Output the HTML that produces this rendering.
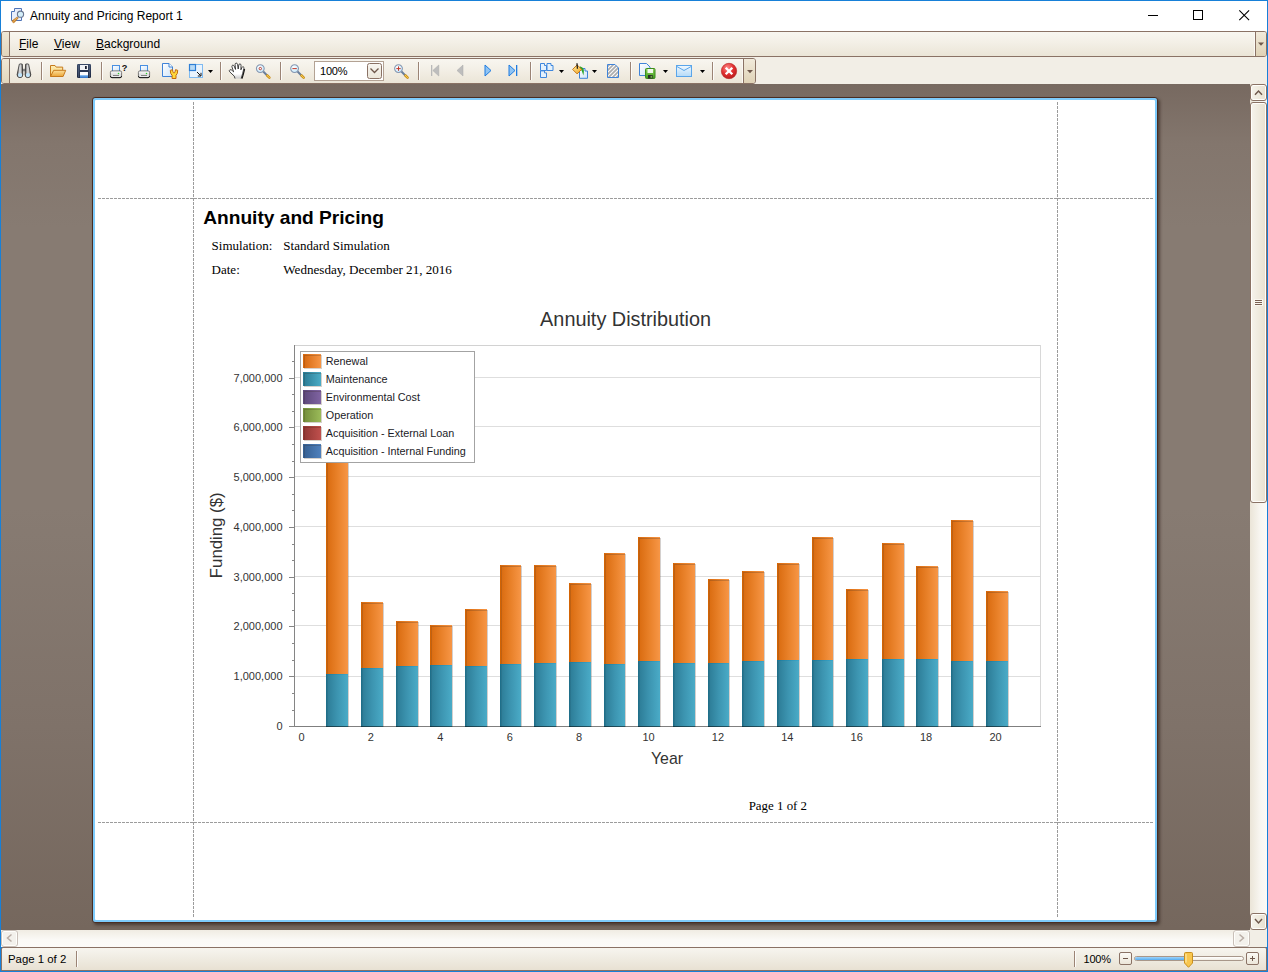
<!DOCTYPE html>
<html><head><meta charset="utf-8"><title>Annuity and Pricing Report 1</title>
<style>
html,body{margin:0;padding:0;}
body{width:1268px;height:972px;overflow:hidden;position:relative;background:#1780d8;font-family:"Liberation Sans",sans-serif;font-size:12px;color:#000;}
.abs{position:absolute;}
#title{left:1px;top:1px;width:1266px;height:30px;background:#fff;}
#title .cap{position:absolute;left:29px;top:7px;font-size:12px;line-height:16px;white-space:nowrap;}
#chrome{left:1px;top:31px;width:1266px;height:53px;background:#f2eee6;}
.bar{position:absolute;box-sizing:border-box;border:1px solid #8a7265;border-radius:3px;background:linear-gradient(#f8f6f0 0%,#f3efe6 45%,#ebe5d7 100%);}
#menubar{left:1px;top:31px;width:1266px;height:26px;}
#toolbar{left:1px;top:58px;width:755px;height:26px;}
.grip{position:absolute;left:0;top:0;width:7px;height:24px;background:linear-gradient(#efe7d6,#e2d6bd);border-right:1px solid #8a7265;border-radius:2px 0 0 2px;}
.endstrip{position:absolute;right:0;top:0;width:10px;height:24px;background:linear-gradient(#f1eadb,#dfd2b6);border-left:1px solid #8a7265;box-shadow:-1px 0 0 #fbf9f4;border-radius:0 2px 2px 0;}
.menu{position:absolute;top:4px;font-size:12px;line-height:16px;white-space:nowrap;}
.menu u{text-decoration:underline;}
.sep{position:absolute;top:3px;width:1px;height:18px;background:#9b8475;box-shadow:1px 0 0 #fdfcfa;}
#preview{left:1px;top:84px;width:1249px;height:846px;background:linear-gradient(#776960 0%,#83766d 7%,#877b72 17%,#877b72 50%,#7f7269 76%,#75675d 100%);}
#page{left:92px;top:97px;width:1066px;height:826px;box-sizing:border-box;border:1px solid #4a2d22;border-radius:3px;background:#7ecbfb;box-shadow:2px 2px 3px rgba(40,25,20,.55);}
#pagein{left:95px;top:100px;width:1060px;height:820px;background:#fff;border-radius:1px;}
.dashv{position:absolute;width:1px;background:repeating-linear-gradient(to bottom,#9c9c9c 0,#9c9c9c 3px,transparent 3px,transparent 4px);}
.dashh{position:absolute;height:1px;background:repeating-linear-gradient(to right,#9c9c9c 0,#9c9c9c 3px,transparent 3px,transparent 4px);}
#vscroll{left:1250px;top:84px;width:17px;height:846px;background:linear-gradient(to right,#ebe5d8,#f8f6f1 60%,#fbfaf7);}
#hscroll{left:1px;top:930px;width:1249px;height:17px;background:linear-gradient(#f0ece3,#fbfaf7 60%,#fcfbf9);}
#corner{left:1250px;top:930px;width:17px;height:17px;background:#f2eee6;}
.sb{position:absolute;box-sizing:border-box;border:1px solid #8a7265;border-radius:3px;background:linear-gradient(to right,#f6f3ec,#e8e1d0);box-shadow:inset 0 0 0 1px #fffefb;}
.sb.dis{border-color:#c9c0b9;background:#f3f1ec;}
.zb{position:absolute;width:13px;height:13px;box-sizing:border-box;border:1px solid #8a7265;border-radius:2px;background:linear-gradient(#fbfaf6,#ece6d9);}
.sbtn{position:absolute;box-sizing:border-box;border:1px solid #c9bdb0;border-radius:3px;background:linear-gradient(#fbfaf7,#ece6da);}
#status{left:1px;top:947px;width:1266px;height:24px;box-sizing:border-box;border:1px solid #8a7265;border-radius:2px 2px 0 0;background:linear-gradient(#f7f5ef,#efebe1 50%,#e8e1d3);}
</style></head>
<body>
<div id="title" class="abs"><span class="cap">Annuity and Pricing Report 1</span></div>
<div id="chrome" class="abs"></div>
<div id="menubar" class="bar"><div class="grip"></div><div class="endstrip"></div>
<span class="menu" style="left:17px"><u>F</u>ile</span>
<span class="menu" style="left:52px"><u>V</u>iew</span>
<span class="menu" style="left:94px"><u>B</u>ackground</span>
</div>
<div id="toolbar" class="bar"><div class="grip"></div><div class="endstrip" style="width:11px"></div>
<div style="position:absolute;left:312px;top:2px;width:70px;height:20px;box-sizing:border-box;border:1px solid #b3a294;background:#fff">
 <span style="position:absolute;left:5px;top:1px;font-size:11px;line-height:16px;white-space:nowrap;letter-spacing:-.200px">100%</span>
 <div style="position:absolute;left:52px;top:1px;width:15px;height:16px;box-sizing:border-box;border:1px solid #8a7265;border-radius:2.500px;background:linear-gradient(#f8f6f1,#ebe6da)"></div>
</div>
<div class="sep" style="left:39px"></div><div class="sep" style="left:99px"></div><div class="sep" style="left:218px"></div><div class="sep" style="left:278px"></div>
<div class="sep" style="left:416px"></div><div class="sep" style="left:528px"></div><div class="sep" style="left:628px"></div><div class="sep" style="left:710px"></div>
</div>
<div id="preview" class="abs"></div>
<div id="page" class="abs"></div><div id="pagein" class="abs"></div>
<div class="dashv" style="left:193px;top:102px;height:815px"></div>
<div class="dashv" style="left:1057px;top:102px;height:815px"></div>
<div class="dashh" style="left:98px;top:198px;width:1055px"></div>
<div class="dashh" style="left:98px;top:822px;width:1055px"></div>
<svg id="chart" width="1268" height="972" viewBox="0 0 1268 972" shape-rendering="crispEdges" style="position:absolute;left:0;top:0">
<defs>
<linearGradient id="gO" x1="0" x2="1" y1="0" y2="0"><stop offset="0" stop-color="#d8690d"/><stop offset="0.5" stop-color="#e88028"/><stop offset="1" stop-color="#f79646"/></linearGradient>
<linearGradient id="gT" x1="0" x2="1" y1="0" y2="0"><stop offset="0" stop-color="#2b7a94"/><stop offset="0.5" stop-color="#3c94b0"/><stop offset="1" stop-color="#4aabc7"/></linearGradient>
<linearGradient id="L0" x1="0" x2="1" y1="0" y2="0"><stop offset="0" stop-color="#d5670f"/><stop offset="1" stop-color="#f79646"/></linearGradient>
<linearGradient id="L1" x1="0" x2="1" y1="0" y2="0"><stop offset="0" stop-color="#2a7a93"/><stop offset="1" stop-color="#4bacc6"/></linearGradient>
<linearGradient id="L2" x1="0" x2="1" y1="0" y2="0"><stop offset="0" stop-color="#5c477a"/><stop offset="1" stop-color="#8064a2"/></linearGradient>
<linearGradient id="L3" x1="0" x2="1" y1="0" y2="0"><stop offset="0" stop-color="#728c3a"/><stop offset="1" stop-color="#9bbb59"/></linearGradient>
<linearGradient id="L4" x1="0" x2="1" y1="0" y2="0"><stop offset="0" stop-color="#8f3633"/><stop offset="1" stop-color="#c0504d"/></linearGradient>
<linearGradient id="L5" x1="0" x2="1" y1="0" y2="0"><stop offset="0" stop-color="#365f91"/><stop offset="1" stop-color="#4f81bd"/></linearGradient>
<linearGradient id="gT2" x1="0" x2="1" y1="0" y2="0"><stop offset="0" stop-color="#1d7797"/><stop offset="1" stop-color="#3ba7cb"/></linearGradient>
</defs>
<rect x="295" y="676" width="745" height="1" fill="#dedede"/>
<rect x="295" y="625" width="745" height="1" fill="#dedede"/>
<rect x="295" y="576" width="745" height="1" fill="#dedede"/>
<rect x="295" y="526" width="745" height="1" fill="#dedede"/>
<rect x="295" y="476" width="745" height="1" fill="#dedede"/>
<rect x="295" y="426" width="745" height="1" fill="#dedede"/>
<rect x="295" y="377" width="745" height="1" fill="#dedede"/>
<rect x="294" y="345" width="747" height="1" fill="#d2d2d2"/>
<rect x="1040" y="345" width="1" height="381" fill="#d8d8d8"/>
<rect x="348" y="401" width="1" height="326" fill="#5a4a40" opacity="0.26"/>
<rect x="326" y="400" width="22" height="274" fill="url(#gO)"/>
<rect x="326" y="400" width="1" height="274" fill="#d36404"/>
<rect x="327" y="401" width="21" height="1" fill="#5a3a20" opacity="0.28"/>
<rect x="327" y="402" width="1" height="272" fill="#5a3a20" opacity="0.22"/>
<rect x="326" y="674" width="22" height="53" fill="url(#gT)"/>
<rect x="326" y="674" width="22" height="1" fill="url(#gT2)"/>
<rect x="326" y="674" width="1" height="53" fill="#1f6f8a"/>
<rect x="327" y="675" width="1" height="52" fill="#103848" opacity="0.12"/>
<rect x="383" y="603" width="1" height="124" fill="#5a4a40" opacity="0.26"/>
<rect x="361" y="602" width="22" height="66" fill="url(#gO)"/>
<rect x="361" y="602" width="1" height="66" fill="#d36404"/>
<rect x="362" y="603" width="21" height="1" fill="#5a3a20" opacity="0.28"/>
<rect x="362" y="604" width="1" height="64" fill="#5a3a20" opacity="0.22"/>
<rect x="361" y="668" width="22" height="59" fill="url(#gT)"/>
<rect x="361" y="668" width="22" height="1" fill="url(#gT2)"/>
<rect x="361" y="668" width="1" height="59" fill="#1f6f8a"/>
<rect x="362" y="669" width="1" height="58" fill="#103848" opacity="0.12"/>
<rect x="418" y="622" width="1" height="105" fill="#5a4a40" opacity="0.26"/>
<rect x="396" y="621" width="22" height="45" fill="url(#gO)"/>
<rect x="396" y="621" width="1" height="45" fill="#d36404"/>
<rect x="397" y="622" width="21" height="1" fill="#5a3a20" opacity="0.28"/>
<rect x="397" y="623" width="1" height="43" fill="#5a3a20" opacity="0.22"/>
<rect x="396" y="666" width="22" height="61" fill="url(#gT)"/>
<rect x="396" y="666" width="22" height="1" fill="url(#gT2)"/>
<rect x="396" y="666" width="1" height="61" fill="#1f6f8a"/>
<rect x="397" y="667" width="1" height="60" fill="#103848" opacity="0.12"/>
<rect x="452" y="626" width="1" height="101" fill="#5a4a40" opacity="0.26"/>
<rect x="430" y="625" width="22" height="40" fill="url(#gO)"/>
<rect x="430" y="625" width="1" height="40" fill="#d36404"/>
<rect x="431" y="626" width="21" height="1" fill="#5a3a20" opacity="0.28"/>
<rect x="431" y="627" width="1" height="38" fill="#5a3a20" opacity="0.22"/>
<rect x="430" y="665" width="22" height="62" fill="url(#gT)"/>
<rect x="430" y="665" width="22" height="1" fill="url(#gT2)"/>
<rect x="430" y="665" width="1" height="62" fill="#1f6f8a"/>
<rect x="431" y="666" width="1" height="61" fill="#103848" opacity="0.12"/>
<rect x="487" y="610" width="1" height="117" fill="#5a4a40" opacity="0.26"/>
<rect x="465" y="609" width="22" height="57" fill="url(#gO)"/>
<rect x="465" y="609" width="1" height="57" fill="#d36404"/>
<rect x="466" y="610" width="21" height="1" fill="#5a3a20" opacity="0.28"/>
<rect x="466" y="611" width="1" height="55" fill="#5a3a20" opacity="0.22"/>
<rect x="465" y="666" width="22" height="61" fill="url(#gT)"/>
<rect x="465" y="666" width="22" height="1" fill="url(#gT2)"/>
<rect x="465" y="666" width="1" height="61" fill="#1f6f8a"/>
<rect x="466" y="667" width="1" height="60" fill="#103848" opacity="0.12"/>
<rect x="521" y="566" width="1" height="161" fill="#5a4a40" opacity="0.26"/>
<rect x="500" y="565" width="21" height="99" fill="url(#gO)"/>
<rect x="500" y="565" width="1" height="99" fill="#d36404"/>
<rect x="501" y="566" width="20" height="1" fill="#5a3a20" opacity="0.28"/>
<rect x="501" y="567" width="1" height="97" fill="#5a3a20" opacity="0.22"/>
<rect x="500" y="664" width="21" height="63" fill="url(#gT)"/>
<rect x="500" y="664" width="21" height="1" fill="url(#gT2)"/>
<rect x="500" y="664" width="1" height="63" fill="#1f6f8a"/>
<rect x="501" y="665" width="1" height="62" fill="#103848" opacity="0.12"/>
<rect x="556" y="566" width="1" height="161" fill="#5a4a40" opacity="0.26"/>
<rect x="534" y="565" width="22" height="98" fill="url(#gO)"/>
<rect x="534" y="565" width="1" height="98" fill="#d36404"/>
<rect x="535" y="566" width="21" height="1" fill="#5a3a20" opacity="0.28"/>
<rect x="535" y="567" width="1" height="96" fill="#5a3a20" opacity="0.22"/>
<rect x="534" y="663" width="22" height="64" fill="url(#gT)"/>
<rect x="534" y="663" width="22" height="1" fill="url(#gT2)"/>
<rect x="534" y="663" width="1" height="64" fill="#1f6f8a"/>
<rect x="535" y="664" width="1" height="63" fill="#103848" opacity="0.12"/>
<rect x="591" y="584" width="1" height="143" fill="#5a4a40" opacity="0.26"/>
<rect x="569" y="583" width="22" height="79" fill="url(#gO)"/>
<rect x="569" y="583" width="1" height="79" fill="#d36404"/>
<rect x="570" y="584" width="21" height="1" fill="#5a3a20" opacity="0.28"/>
<rect x="570" y="585" width="1" height="77" fill="#5a3a20" opacity="0.22"/>
<rect x="569" y="662" width="22" height="65" fill="url(#gT)"/>
<rect x="569" y="662" width="22" height="1" fill="url(#gT2)"/>
<rect x="569" y="662" width="1" height="65" fill="#1f6f8a"/>
<rect x="570" y="663" width="1" height="64" fill="#103848" opacity="0.12"/>
<rect x="625" y="554" width="1" height="173" fill="#5a4a40" opacity="0.26"/>
<rect x="604" y="553" width="21" height="111" fill="url(#gO)"/>
<rect x="604" y="553" width="1" height="111" fill="#d36404"/>
<rect x="605" y="554" width="20" height="1" fill="#5a3a20" opacity="0.28"/>
<rect x="605" y="555" width="1" height="109" fill="#5a3a20" opacity="0.22"/>
<rect x="604" y="664" width="21" height="63" fill="url(#gT)"/>
<rect x="604" y="664" width="21" height="1" fill="url(#gT2)"/>
<rect x="604" y="664" width="1" height="63" fill="#1f6f8a"/>
<rect x="605" y="665" width="1" height="62" fill="#103848" opacity="0.12"/>
<rect x="660" y="538" width="1" height="189" fill="#5a4a40" opacity="0.26"/>
<rect x="638" y="537" width="22" height="124" fill="url(#gO)"/>
<rect x="638" y="537" width="1" height="124" fill="#d36404"/>
<rect x="639" y="538" width="21" height="1" fill="#5a3a20" opacity="0.28"/>
<rect x="639" y="539" width="1" height="122" fill="#5a3a20" opacity="0.22"/>
<rect x="638" y="661" width="22" height="66" fill="url(#gT)"/>
<rect x="638" y="661" width="22" height="1" fill="url(#gT2)"/>
<rect x="638" y="661" width="1" height="66" fill="#1f6f8a"/>
<rect x="639" y="662" width="1" height="65" fill="#103848" opacity="0.12"/>
<rect x="695" y="564" width="1" height="163" fill="#5a4a40" opacity="0.26"/>
<rect x="673" y="563" width="22" height="100" fill="url(#gO)"/>
<rect x="673" y="563" width="1" height="100" fill="#d36404"/>
<rect x="674" y="564" width="21" height="1" fill="#5a3a20" opacity="0.28"/>
<rect x="674" y="565" width="1" height="98" fill="#5a3a20" opacity="0.22"/>
<rect x="673" y="663" width="22" height="64" fill="url(#gT)"/>
<rect x="673" y="663" width="22" height="1" fill="url(#gT2)"/>
<rect x="673" y="663" width="1" height="64" fill="#1f6f8a"/>
<rect x="674" y="664" width="1" height="63" fill="#103848" opacity="0.12"/>
<rect x="729" y="580" width="1" height="147" fill="#5a4a40" opacity="0.26"/>
<rect x="708" y="579" width="21" height="84" fill="url(#gO)"/>
<rect x="708" y="579" width="1" height="84" fill="#d36404"/>
<rect x="709" y="580" width="20" height="1" fill="#5a3a20" opacity="0.28"/>
<rect x="709" y="581" width="1" height="82" fill="#5a3a20" opacity="0.22"/>
<rect x="708" y="663" width="21" height="64" fill="url(#gT)"/>
<rect x="708" y="663" width="21" height="1" fill="url(#gT2)"/>
<rect x="708" y="663" width="1" height="64" fill="#1f6f8a"/>
<rect x="709" y="664" width="1" height="63" fill="#103848" opacity="0.12"/>
<rect x="764" y="572" width="1" height="155" fill="#5a4a40" opacity="0.26"/>
<rect x="742" y="571" width="22" height="90" fill="url(#gO)"/>
<rect x="742" y="571" width="1" height="90" fill="#d36404"/>
<rect x="743" y="572" width="21" height="1" fill="#5a3a20" opacity="0.28"/>
<rect x="743" y="573" width="1" height="88" fill="#5a3a20" opacity="0.22"/>
<rect x="742" y="661" width="22" height="66" fill="url(#gT)"/>
<rect x="742" y="661" width="22" height="1" fill="url(#gT2)"/>
<rect x="742" y="661" width="1" height="66" fill="#1f6f8a"/>
<rect x="743" y="662" width="1" height="65" fill="#103848" opacity="0.12"/>
<rect x="799" y="564" width="1" height="163" fill="#5a4a40" opacity="0.26"/>
<rect x="777" y="563" width="22" height="97" fill="url(#gO)"/>
<rect x="777" y="563" width="1" height="97" fill="#d36404"/>
<rect x="778" y="564" width="21" height="1" fill="#5a3a20" opacity="0.28"/>
<rect x="778" y="565" width="1" height="95" fill="#5a3a20" opacity="0.22"/>
<rect x="777" y="660" width="22" height="67" fill="url(#gT)"/>
<rect x="777" y="660" width="22" height="1" fill="url(#gT2)"/>
<rect x="777" y="660" width="1" height="67" fill="#1f6f8a"/>
<rect x="778" y="661" width="1" height="66" fill="#103848" opacity="0.12"/>
<rect x="833" y="538" width="1" height="189" fill="#5a4a40" opacity="0.26"/>
<rect x="812" y="537" width="21" height="123" fill="url(#gO)"/>
<rect x="812" y="537" width="1" height="123" fill="#d36404"/>
<rect x="813" y="538" width="20" height="1" fill="#5a3a20" opacity="0.28"/>
<rect x="813" y="539" width="1" height="121" fill="#5a3a20" opacity="0.22"/>
<rect x="812" y="660" width="21" height="67" fill="url(#gT)"/>
<rect x="812" y="660" width="21" height="1" fill="url(#gT2)"/>
<rect x="812" y="660" width="1" height="67" fill="#1f6f8a"/>
<rect x="813" y="661" width="1" height="66" fill="#103848" opacity="0.12"/>
<rect x="868" y="590" width="1" height="137" fill="#5a4a40" opacity="0.26"/>
<rect x="846" y="589" width="22" height="70" fill="url(#gO)"/>
<rect x="846" y="589" width="1" height="70" fill="#d36404"/>
<rect x="847" y="590" width="21" height="1" fill="#5a3a20" opacity="0.28"/>
<rect x="847" y="591" width="1" height="68" fill="#5a3a20" opacity="0.22"/>
<rect x="846" y="659" width="22" height="68" fill="url(#gT)"/>
<rect x="846" y="659" width="22" height="1" fill="url(#gT2)"/>
<rect x="846" y="659" width="1" height="68" fill="#1f6f8a"/>
<rect x="847" y="660" width="1" height="67" fill="#103848" opacity="0.12"/>
<rect x="904" y="544" width="1" height="183" fill="#5a4a40" opacity="0.26"/>
<rect x="882" y="543" width="22" height="116" fill="url(#gO)"/>
<rect x="882" y="543" width="1" height="116" fill="#d36404"/>
<rect x="883" y="544" width="21" height="1" fill="#5a3a20" opacity="0.28"/>
<rect x="883" y="545" width="1" height="114" fill="#5a3a20" opacity="0.22"/>
<rect x="882" y="659" width="22" height="68" fill="url(#gT)"/>
<rect x="882" y="659" width="22" height="1" fill="url(#gT2)"/>
<rect x="882" y="659" width="1" height="68" fill="#1f6f8a"/>
<rect x="883" y="660" width="1" height="67" fill="#103848" opacity="0.12"/>
<rect x="938" y="567" width="1" height="160" fill="#5a4a40" opacity="0.26"/>
<rect x="916" y="566" width="22" height="93" fill="url(#gO)"/>
<rect x="916" y="566" width="1" height="93" fill="#d36404"/>
<rect x="917" y="567" width="21" height="1" fill="#5a3a20" opacity="0.28"/>
<rect x="917" y="568" width="1" height="91" fill="#5a3a20" opacity="0.22"/>
<rect x="916" y="659" width="22" height="68" fill="url(#gT)"/>
<rect x="916" y="659" width="22" height="1" fill="url(#gT2)"/>
<rect x="916" y="659" width="1" height="68" fill="#1f6f8a"/>
<rect x="917" y="660" width="1" height="67" fill="#103848" opacity="0.12"/>
<rect x="973" y="521" width="1" height="206" fill="#5a4a40" opacity="0.26"/>
<rect x="951" y="520" width="22" height="141" fill="url(#gO)"/>
<rect x="951" y="520" width="1" height="141" fill="#d36404"/>
<rect x="952" y="521" width="21" height="1" fill="#5a3a20" opacity="0.28"/>
<rect x="952" y="522" width="1" height="139" fill="#5a3a20" opacity="0.22"/>
<rect x="951" y="661" width="22" height="66" fill="url(#gT)"/>
<rect x="951" y="661" width="22" height="1" fill="url(#gT2)"/>
<rect x="951" y="661" width="1" height="66" fill="#1f6f8a"/>
<rect x="952" y="662" width="1" height="65" fill="#103848" opacity="0.12"/>
<rect x="1008" y="592" width="1" height="135" fill="#5a4a40" opacity="0.26"/>
<rect x="986" y="591" width="22" height="70" fill="url(#gO)"/>
<rect x="986" y="591" width="1" height="70" fill="#d36404"/>
<rect x="987" y="592" width="21" height="1" fill="#5a3a20" opacity="0.28"/>
<rect x="987" y="593" width="1" height="68" fill="#5a3a20" opacity="0.22"/>
<rect x="986" y="661" width="22" height="66" fill="url(#gT)"/>
<rect x="986" y="661" width="22" height="1" fill="url(#gT2)"/>
<rect x="986" y="661" width="1" height="66" fill="#1f6f8a"/>
<rect x="987" y="662" width="1" height="65" fill="#103848" opacity="0.12"/>
<rect x="294" y="345" width="1" height="382" fill="#858585"/>
<rect x="295" y="726" width="746" height="1" fill="#000" opacity="0.5"/>
<rect x="289" y="726" width="5" height="1" fill="#858585"/>
<rect x="292" y="710" width="2" height="1" fill="#858585"/>
<rect x="292" y="693" width="2" height="1" fill="#858585"/>
<rect x="289" y="676" width="5" height="1" fill="#858585"/>
<rect x="292" y="660" width="2" height="1" fill="#858585"/>
<rect x="292" y="643" width="2" height="1" fill="#858585"/>
<rect x="289" y="626" width="5" height="1" fill="#858585"/>
<rect x="292" y="610" width="2" height="1" fill="#858585"/>
<rect x="292" y="593" width="2" height="1" fill="#858585"/>
<rect x="289" y="577" width="5" height="1" fill="#858585"/>
<rect x="292" y="560" width="2" height="1" fill="#858585"/>
<rect x="292" y="544" width="2" height="1" fill="#858585"/>
<rect x="289" y="527" width="5" height="1" fill="#858585"/>
<rect x="292" y="510" width="2" height="1" fill="#858585"/>
<rect x="292" y="494" width="2" height="1" fill="#858585"/>
<rect x="289" y="477" width="5" height="1" fill="#858585"/>
<rect x="292" y="461" width="2" height="1" fill="#858585"/>
<rect x="292" y="444" width="2" height="1" fill="#858585"/>
<rect x="289" y="427" width="5" height="1" fill="#858585"/>
<rect x="292" y="411" width="2" height="1" fill="#858585"/>
<rect x="292" y="394" width="2" height="1" fill="#858585"/>
<rect x="289" y="378" width="5" height="1" fill="#858585"/>
<rect x="292" y="361" width="2" height="1" fill="#858585"/>
<rect x="300.5" y="351.5" width="174" height="111" fill="#fff" stroke="#a3a3a3" stroke-width="1"/>
<rect x="304" y="355" width="18" height="14" fill="#6a5a48" opacity="0.28"/>
<rect x="303" y="354" width="18" height="14" fill="url(#L0)"/>
<rect x="304" y="355" width="17" height="1" fill="#30200f" opacity="0.2"/>
<rect x="304" y="356" width="1" height="12" fill="#30200f" opacity="0.16"/>
<rect x="304" y="373" width="18" height="14" fill="#6a5a48" opacity="0.28"/>
<rect x="303" y="372" width="18" height="14" fill="url(#L1)"/>
<rect x="304" y="373" width="17" height="1" fill="#30200f" opacity="0.2"/>
<rect x="304" y="374" width="1" height="12" fill="#30200f" opacity="0.16"/>
<rect x="304" y="391" width="18" height="14" fill="#6a5a48" opacity="0.28"/>
<rect x="303" y="390" width="18" height="14" fill="url(#L2)"/>
<rect x="304" y="391" width="17" height="1" fill="#30200f" opacity="0.2"/>
<rect x="304" y="392" width="1" height="12" fill="#30200f" opacity="0.16"/>
<rect x="304" y="409" width="18" height="14" fill="#6a5a48" opacity="0.28"/>
<rect x="303" y="408" width="18" height="14" fill="url(#L3)"/>
<rect x="304" y="409" width="17" height="1" fill="#30200f" opacity="0.2"/>
<rect x="304" y="410" width="1" height="12" fill="#30200f" opacity="0.16"/>
<rect x="304" y="427" width="18" height="14" fill="#6a5a48" opacity="0.28"/>
<rect x="303" y="426" width="18" height="14" fill="url(#L4)"/>
<rect x="304" y="427" width="17" height="1" fill="#30200f" opacity="0.2"/>
<rect x="304" y="428" width="1" height="12" fill="#30200f" opacity="0.16"/>
<rect x="304" y="445" width="18" height="14" fill="#6a5a48" opacity="0.28"/>
<rect x="303" y="444" width="18" height="14" fill="url(#L5)"/>
<rect x="304" y="445" width="17" height="1" fill="#30200f" opacity="0.2"/>
<rect x="304" y="446" width="1" height="12" fill="#30200f" opacity="0.16"/>
<text x="325.8" y="365" font-family="Liberation Sans" font-size="10.8" fill="#1a1a26" text-anchor="start" >Renewal</text>
<text x="325.8" y="383" font-family="Liberation Sans" font-size="10.8" fill="#1a1a26" text-anchor="start" >Maintenance</text>
<text x="325.8" y="401" font-family="Liberation Sans" font-size="10.8" fill="#1a1a26" text-anchor="start" >Environmental Cost</text>
<text x="325.8" y="419" font-family="Liberation Sans" font-size="10.8" fill="#1a1a26" text-anchor="start" >Operation</text>
<text x="325.8" y="437" font-family="Liberation Sans" font-size="10.8" fill="#1a1a26" text-anchor="start" >Acquisition - External Loan</text>
<text x="325.8" y="455" font-family="Liberation Sans" font-size="10.8" fill="#1a1a26" text-anchor="start" >Acquisition - Internal Funding</text>
<text x="282.5" y="730.4" font-family="Liberation Sans" font-size="11" fill="#333" text-anchor="end" >0</text>
<text x="282.5" y="680.4" font-family="Liberation Sans" font-size="11" fill="#333" text-anchor="end" >1,000,000</text>
<text x="282.5" y="630.4" font-family="Liberation Sans" font-size="11" fill="#333" text-anchor="end" >2,000,000</text>
<text x="282.5" y="581.4" font-family="Liberation Sans" font-size="11" fill="#333" text-anchor="end" >3,000,000</text>
<text x="282.5" y="531.4" font-family="Liberation Sans" font-size="11" fill="#333" text-anchor="end" >4,000,000</text>
<text x="282.5" y="481.4" font-family="Liberation Sans" font-size="11" fill="#333" text-anchor="end" >5,000,000</text>
<text x="282.5" y="431.4" font-family="Liberation Sans" font-size="11" fill="#333" text-anchor="end" >6,000,000</text>
<text x="282.5" y="382.4" font-family="Liberation Sans" font-size="11" fill="#333" text-anchor="end" >7,000,000</text>
<text x="301.5" y="741.3" font-family="Liberation Sans" font-size="11" fill="#333" text-anchor="middle" >0</text>
<text x="370.9" y="741.3" font-family="Liberation Sans" font-size="11" fill="#333" text-anchor="middle" >2</text>
<text x="440.3" y="741.3" font-family="Liberation Sans" font-size="11" fill="#333" text-anchor="middle" >4</text>
<text x="509.70000000000005" y="741.3" font-family="Liberation Sans" font-size="11" fill="#333" text-anchor="middle" >6</text>
<text x="579.1" y="741.3" font-family="Liberation Sans" font-size="11" fill="#333" text-anchor="middle" >8</text>
<text x="648.5" y="741.3" font-family="Liberation Sans" font-size="11" fill="#333" text-anchor="middle" >10</text>
<text x="717.9000000000001" y="741.3" font-family="Liberation Sans" font-size="11" fill="#333" text-anchor="middle" >12</text>
<text x="787.3000000000001" y="741.3" font-family="Liberation Sans" font-size="11" fill="#333" text-anchor="middle" >14</text>
<text x="856.7" y="741.3" font-family="Liberation Sans" font-size="11" fill="#333" text-anchor="middle" >16</text>
<text x="926.1" y="741.3" font-family="Liberation Sans" font-size="11" fill="#333" text-anchor="middle" >18</text>
<text x="995.5" y="741.3" font-family="Liberation Sans" font-size="11" fill="#333" text-anchor="middle" >20</text>
<text x="625.6" y="326.2" font-family="Liberation Sans" font-size="19.85" fill="#333" text-anchor="middle" >Annuity Distribution</text>
<text x="667" y="764" font-family="Liberation Sans" font-size="15.9" fill="#333" text-anchor="middle" >Year</text>
<text x="0" y="0" font-family="Liberation Sans" font-size="16.8" fill="#333" text-anchor="middle" transform="translate(222,535.3) rotate(-90)">Funding ($)</text>
<text x="203.2" y="223.6" font-family="Liberation Sans" font-size="19.15" fill="#000" text-anchor="start" font-weight="bold">Annuity and Pricing</text>
<text x="211.6" y="250.3" font-family="Liberation Serif" font-size="13" fill="#000" text-anchor="start" >Simulation:</text>
<text x="283.3" y="250.3" font-family="Liberation Serif" font-size="13" fill="#000" text-anchor="start" >Standard Simulation</text>
<text x="211.6" y="274" font-family="Liberation Serif" font-size="13" fill="#000" text-anchor="start" >Date:</text>
<text x="283.3" y="274" font-family="Liberation Serif" font-size="13.1" fill="#000" text-anchor="start" >Wednesday, December 21, 2016</text>
<text x="748.7" y="809.7" font-family="Liberation Serif" font-size="12.9" fill="#000" text-anchor="start" >Page 1 of 2</text>
</svg>

<div id="vscroll" class="abs">
 <div class="sb" style="left:0;top:0;width:17px;height:17px"></div>
 <div class="sb" style="left:0;top:18px;width:17px;height:401px"></div>
 <div class="sb" style="left:0;top:829px;width:17px;height:17px"></div>
</div>
<div id="hscroll" class="abs">
 <div class="sb dis" style="left:0;top:0;width:17px;height:17px"></div>
 <div class="sb dis" style="left:1232px;top:0;width:17px;height:17px"></div>
</div>
<div id="corner" class="abs"></div>
<div id="status" class="abs">
 <span style="position:absolute;left:6px;top:3px;font-size:11.400px;line-height:16px;white-space:nowrap">Page 1 of 2</span>
 <div class="sep" style="left:74px;top:3px;height:16px"></div>
 <div class="sep" style="left:1072px;top:3px;height:16px"></div>
 <span style="position:absolute;left:1081.500px;top:3px;font-size:11px;line-height:16px;white-space:nowrap;letter-spacing:-.200px">100%</span>
 <div class="zb" style="left:1117px;top:4px"></div>
 <div class="zb" style="left:1244px;top:4px"></div>
 <div style="position:absolute;left:1132px;top:8px;width:110px;height:5px;box-sizing:border-box;border:1px solid #a8978a;border-radius:3px;background:linear-gradient(#fff,#f1ede4)"></div>
 <div style="position:absolute;left:1133px;top:9px;width:52px;height:3px;border-radius:2px 0 0 2px;background:linear-gradient(#9fd3fa,#58aef0)"></div>
</div>
<svg width="1268" height="972" viewBox="0 0 1268 972" style="position:absolute;left:0;top:0">
 <g fill="none" stroke="#6e574b" stroke-width="1.450">
  <path d="M1255 94.800l3.500-3.800 3.500 3.800"/><path d="M1255 919l3.500 4 3.500-4"/>
 </g>
 <g fill="none" stroke="#b9ada5" stroke-width="1.500">
  <path d="M11.500 934.500l-4 3.500 4 3.500"/><path d="M1239.500 934.500l4 3.500-4 3.500"/>
 </g>
 <g shape-rendering="crispEdges">
  <rect x="1254" y="299" width="9" height="7" fill="#fbf9f3" opacity=".800"/>
  <rect x="1255" y="300" width="7" height="1" fill="#7a6052"/><rect x="1255" y="302" width="7" height="1" fill="#7a6052"/><rect x="1255" y="304" width="7" height="1" fill="#7a6052"/>
  <rect x="1123" y="958" width="5" height="1" fill="#6e574b"/>
  <rect x="1250" y="958" width="5" height="1" fill="#6e574b"/><rect x="1252" y="956" width="1" height="5" fill="#6e574b"/>
  <rect x="373" y="66" width="0" height="0"/>
 </g>
 <path d="M1184.500 953.500q0-1 1-1h6q1 0 1 1v9.500l-4 4.300-4-4.300z" fill="#f8c64e" stroke="#c98f1e" stroke-width="1"/>
 <path d="M1186 954v8.500" stroke="#fde9a8" stroke-width="1.200"/>
</svg>
<svg id="icons" width="1268" height="972" viewBox="0 0 1268 972" style="position:absolute;left:0;top:0">
<defs>
<linearGradient id="iTube" x1="0" x2="1" y1="0" y2="0"><stop offset="0" stop-color="#444"/><stop offset=".250" stop-color="#a2a2a2"/><stop offset=".500" stop-color="#eeeeee"/><stop offset=".750" stop-color="#a8a8a8"/><stop offset="1" stop-color="#2c2c2c"/></linearGradient>
<linearGradient id="iFoldB" x1="0" x2="0" y1="0" y2="1"><stop offset="0" stop-color="#fdeeb5"/><stop offset="1" stop-color="#f7cf73"/></linearGradient>
<linearGradient id="iFoldF" x1="0" x2="0" y1="0" y2="1"><stop offset="0" stop-color="#fde09a"/><stop offset="1" stop-color="#eba436"/></linearGradient>
<linearGradient id="iPaper" x1="0" x2="1" y1="0" y2="1"><stop offset="0" stop-color="#ffffff"/><stop offset="1" stop-color="#cfe4f8"/></linearGradient>
<linearGradient id="iPrn" x1="0" x2="0" y1="0" y2="1"><stop offset="0" stop-color="#fdfdfd"/><stop offset=".6" stop-color="#dcdcdc"/><stop offset="1" stop-color="#f4f4f4"/></linearGradient>
<linearGradient id="iFlop" x1="0" x2="0" y1="0" y2="1"><stop offset="0" stop-color="#3a4a68"/><stop offset="1" stop-color="#1b2740"/></linearGradient>
<linearGradient id="iBlue" x1="0" x2="0" y1="0" y2="1"><stop offset="0" stop-color="#6fb0ee"/><stop offset="1" stop-color="#2d6fc4"/></linearGradient>
<radialGradient id="iLens" cx=".4" cy=".35" r=".7"><stop offset="0" stop-color="#ffffff"/><stop offset="1" stop-color="#bfe6fb"/></radialGradient>
<linearGradient id="iGold" x1="0" x2="1" y1="0" y2="1"><stop offset="0" stop-color="#fff0a0"/><stop offset="1" stop-color="#f0a020"/></linearGradient>
<radialGradient id="iRed" cx=".4" cy=".3" r=".8"><stop offset="0" stop-color="#ff8a8a"/><stop offset=".5" stop-color="#e03030"/><stop offset="1" stop-color="#b01818"/></radialGradient>
<linearGradient id="iEnv" x1="0" x2="0" y1="0" y2="1"><stop offset="0" stop-color="#f0f8fe"/><stop offset="1" stop-color="#b4daf8"/></linearGradient>
<linearGradient id="iGreen" x1="0" x2="0" y1="0" y2="1"><stop offset="0" stop-color="#8fd45a"/><stop offset="1" stop-color="#3f9a1e"/></linearGradient>
<linearGradient id="iHand" x1="0" x2="0" y1="0" y2="1"><stop offset="0" stop-color="#fff"/><stop offset=".7" stop-color="#fff"/><stop offset="1" stop-color="#c8c8c8"/></linearGradient>
<g id="mag">
  <line x1="3.200" y1="3.200" x2="6.600" y2="6.600" stroke="#6a7f9c" stroke-width="2" stroke-linecap="round"/>
  <line x1="6.900" y1="6.900" x2="9.100" y2="9.100" stroke="#c98a10" stroke-width="2.500" stroke-linecap="round"/>
  <line x1="6.700" y1="6.700" x2="9.200" y2="9.200" stroke="#f8d860" stroke-width="1.300" stroke-dasharray="0.8 0.6"/>
  <circle cx="0" cy="0" r="3.900" fill="url(#iLens)" stroke="#8797b0" stroke-width="1.050"/>
</g>
<path id="dd" d="M0 0h5l-2.5 3z" fill="#000"/>
</defs>

<!-- title icon -->
<g>
 <path d="M14.5 8.5h7v12h-10v-9h3z" fill="#e9eefb" stroke="#4f74b8" stroke-width="1"/>
 <path d="M17.300 16.900l1 1-3.700 4.400q-1 1-2-.100-.900-1 .100-1.900z" fill="#d08a2e" stroke="#b26a16" stroke-width=".500"/>
 <path d="M17.300 17.700l-4 3.700" stroke="#f0c078" stroke-width=".700" fill="none"/>
 <circle cx="20.5" cy="14.2" r="3.1" fill="#d4eef9" stroke="#6a7690" stroke-width="1.1"/>
</g>
<!-- window buttons -->
<g shape-rendering="crispEdges" fill="#000">
 <rect x="1148" y="15" width="10" height="1"/>
 <rect x="1193" y="10" width="10" height="1"/><rect x="1193" y="19" width="10" height="1"/><rect x="1193" y="10" width="1" height="10"/><rect x="1202" y="10" width="1" height="10"/>
</g>
<path d="M1239.300 10.300l9.800 9.800M1249.100 10.300l-9.800 9.800" stroke="#000" stroke-width="1.1" fill="none"/>

<!-- binoculars -->
<g>
 <rect x="22" y="68.800" width="4" height="2.500" fill="#8c8c8c"/>
 <path d="M19.300 64.200q1.500-.700 3 0l.500 10.600q-.200 2.900-2.800 2.900t-2.900-2.900z" fill="url(#iTube)" stroke="#333" stroke-width=".800"/>
 <path d="M25.600 64.200q1.500-.700 3 0l2.200 10.600q-.200 2.900-2.900 2.900t-2.800-2.900z" fill="url(#iTube)" stroke="#333" stroke-width=".800"/>
 <circle cx="20.1" cy="75" r="2.1" fill="#bfe4fb"/><circle cx="27.9" cy="75" r="2.1" fill="#bfe4fb"/>
</g>
<!-- open folder -->
<g stroke-linejoin="round">
 <path d="M50.5 76.5v-11h4.5l1.2 1.6h6.5v3" fill="url(#iFoldB)" stroke="#c67a1c" stroke-width="1"/>
 <path d="M50.5 76.5l3.2-6.2h12l-2.6 6.2z" fill="url(#iFoldF)" stroke="#c67a1c" stroke-width="1"/>
</g>
<!-- floppy -->
<g>
 <rect x="77" y="64" width="14" height="14" rx="1.2" fill="url(#iFlop)"/>
 <rect x="78.4" y="65" width=".7" height="12.4" fill="#5a6a86"/><rect x="88.9" y="65" width=".7" height="12.4" fill="#5a6a86"/>
 <rect x="80" y="65" width="8" height="5" fill="#f0f2f6"/><rect x="85" y="66" width="1.8" height="3" fill="#1c2233"/>
 <rect x="80" y="72" width="8" height="6" fill="#fafcff"/><rect x="80" y="75.2" width="8" height="2.8" fill="url(#iBlue)"/>
</g>
<!-- printers -->
<g id="prn">
 <rect x="112.5" y="65.5" width="7" height="6" fill="url(#iPaper)" stroke="#4a90e2" stroke-width="1"/>
 <path d="M111.800 70.900h8.400q1.400 0 1.400 1.500v3.700q0 1.400-1.400 1.400h-8.400q-1.400 0-1.400-1.400v-3.700q0-1.500 1.400-1.500z" fill="url(#iPrn)" stroke="#4a4a4a" stroke-width=".700"/>
 <path d="M110.500 76q0 1.700 1.400 1.700h8.200q1.400 0 1.400-1.700" fill="none" stroke="#111" stroke-width="1"/>
 <rect x="113" y="75" width="6" height=".9" fill="#777"/>
 <circle cx="118.500" cy="73.500" r=".750" fill="#2ad02a"/>
</g>
<use href="#prn" x="28" y="0"/>
<text x="121.800" y="70.500" font-family="Liberation Sans" font-weight="bold" font-size="9.200" fill="#111">?</text>
<!-- page setup -->
<g>
 <path d="M162.5 63.5h6.5l3.5 3.5v9.5h-10z" fill="url(#iPaper)" stroke="#3f83d8" stroke-width="1"/>
 <path d="M169 63.5v3.5h3.5" fill="#fff" stroke="#3f83d8" stroke-width="1"/>
 <path d="M170.300 70.300L172.500 69.700L172.900 71.600Q173.200 73 174 73Q174.800 73 175.100 71.600L175.500 69.700L177.700 70.300Q177.800 74 176 75.300L176 78.500L172.100 78.500L172.100 75.300Q170.200 74 170.300 70.300Z" fill="#ffd93b" stroke="#c4680a" stroke-width="1" stroke-linejoin="round"/>
</g>
<!-- scale -->
<g>
 <rect x="189.5" y="64.5" width="13" height="13" fill="#e9f3fd" stroke="#7fbaf0" stroke-width="1"/>
 <rect x="189.5" y="64.5" width="6" height="6" fill="#b7daf6" stroke="#2f7fd6" stroke-width="1.2"/>
 <path d="M197 72l3.500 3.500M197.800 76h3.200v-3.200" fill="none" stroke="#111" stroke-width="1"/>
</g>
<use href="#dd" x="208" y="70"/>
<!-- hand -->
<path d="M235 78.500l-.700-2.300-4.600-4.400q-1-1.300.200-2 1.300-.500 2.700 1.100l1 .900-1.700-5.100q-.200-1.200.800-1.500 1-.200 1.500.900l1.300 3.300-.400-5q0-1.200 1.100-1.300 1.100 0 1.300 1.200l.700 4.700.600-4.100q.200-1.100 1.200-1 1 .100 1 1.300l-.100 4.600 1-2.300q.500-1 1.400-.700.900.400.600 1.500l-1.300 5.400-1.400 4.800" fill="url(#iHand)" stroke="#1a1a1a" stroke-width=".800" stroke-linejoin="round"/>
<path d="M244.600 69l-1.300 5.300-1.300 4.300" fill="none" stroke="#111" stroke-width="1.150"/>
<!-- magnifiers -->
<use href="#mag" x="260.300" y="68.600"/>
<circle cx="260.300" cy="68.600" r="1.200" fill="#fff" stroke="#b8382c" stroke-width=".950"/>
<use href="#mag" x="294.600" y="68.600"/>
<rect x="292.400" y="68.100" width="4.400" height="1" fill="#c23a2b"/>
<use href="#mag" x="398.500" y="68.600"/>
<rect x="396.300" y="68.100" width="4.400" height="1" fill="#c23a2b"/><rect x="398" y="66.400" width="1" height="4.400" fill="#c23a2b"/>
<path d="M370.500 68.500l4 4 4-4" fill="none" stroke="#6e574b" stroke-width="1.300"/>
<!-- nav arrows -->
<rect x="431" y="65" width="1.300" height="11" fill="#b9b9b9"/>
<path d="M438.800 65v11l-6-5.500z" fill="#bdbdbd" stroke="#ababab" stroke-width=".5"/>
<path d="M463 65v11l-6-5.500z" fill="#bdbdbd" stroke="#ababab" stroke-width=".5"/>
<path d="M485 65v11l6-5.500z" fill="#8fc4f4" stroke="#1e7be0" stroke-width="1" stroke-linejoin="round"/>
<path d="M509 65v11l6-5.500z" fill="#8fc4f4" stroke="#1e7be0" stroke-width="1" stroke-linejoin="round"/>
<rect x="516" y="65" width="1.300" height="11" fill="#1e7be0"/>
<!-- multi pages -->
<g fill="#e4f1fc" stroke="#3f87dd" stroke-width="1" stroke-linejoin="round">
 <path d="M540.500 63.500h4v2h2v5h-6z"/><path d="M547 63.500h4v2h2v5h-6z"/><path d="M540.500 70.900h4v2h2v4.600h-6z"/>
</g>
<use href="#dd" x="559" y="70"/>
<!-- fill bucket -->
<g>
 <path d="M579.500 78.300v-9.800h5.500v2.500h2.500v7.300z" fill="url(#iPaper)" stroke="#3f83d8" stroke-width="1" stroke-linejoin="round"/>
 <path d="M579.800 66.200q3.200.6 4 3.400.3 2.800-.4 5.800-1-4.800-3.600-6.800z" fill="#2aa52a"/>
 <path d="M577.100 64.900l4.500 4.500-4.500 4.500-4.500-4.500z" fill="url(#iGold)" stroke="#c77818" stroke-width="1" stroke-linejoin="round"/>
 <path d="M577 63.300l.4 5.400" stroke="#111" stroke-width="1.200" fill="none"/>
</g>
<use href="#dd" x="592" y="70"/>
<!-- watermark -->
<g>
 <clipPath id="wmc"><path d="M607.500 64.500h7.500l3.500 3.500v9.500h-11z"/></clipPath>
 <path d="M607.500 64.500h7.500l3.500 3.500v9.500h-11z" fill="#fbfbfb"/>
 <g clip-path="url(#wmc)" stroke="#adadad" stroke-width="1.600"><path d="M604 70l8-8M604 74l12-12M604 78l16-16M606 80l14-14M610 80l10-10M614 80l6-6"/></g>
 <path d="M607.500 64.500h7.500l3.500 3.500v9.500h-11z" fill="none" stroke="#3f83d8" stroke-width="1"/>
</g>
<!-- export -->
<g>
 <path d="M639.500 63.500h7l3.500 3.500v8.500h-10.500z" fill="url(#iPaper)" stroke="#3f83d8" stroke-width="1"/>
 <rect x="645.500" y="68.500" width="9.500" height="10" rx="1" fill="url(#iGreen)" stroke="#3c8c1c" stroke-width="1"/>
 <rect x="647.500" y="69" width="5.500" height="4" fill="#f2f8ee"/>
 <rect x="648" y="75" width="4.600" height="3.500" fill="#2a2a2a"/><rect x="650.600" y="75.800" width="1.200" height="2" fill="#7fd04a"/>
</g>
<use href="#dd" x="663" y="70"/>
<!-- mail -->
<g>
 <rect x="676.500" y="65.500" width="15" height="11" fill="url(#iEnv)" stroke="#5aa5ea" stroke-width="1"/>
 <path d="M676.500 66.300l7.500 4.200 7.500-4.200" fill="none" stroke="#5aa5ea" stroke-width="1"/>
</g>
<use href="#dd" x="700" y="70"/>
<!-- close preview -->
<g>
 <circle cx="729" cy="71" r="7.700" fill="url(#iRed)" stroke="#b52020" stroke-width=".6"/>
 <path d="M725.700 67.700l6.600 6.600M732.300 67.700l-6.600 6.600" stroke="#fff" stroke-width="2.300" fill="none"/>
</g>
<!-- bar end arrows -->
<g fill="#6e574b"><path d="M747 70h6l-3 3.200z"/>
<path d="M1258 42.500h6l-3 3.200z"/></g>
</svg>

</body></html>
